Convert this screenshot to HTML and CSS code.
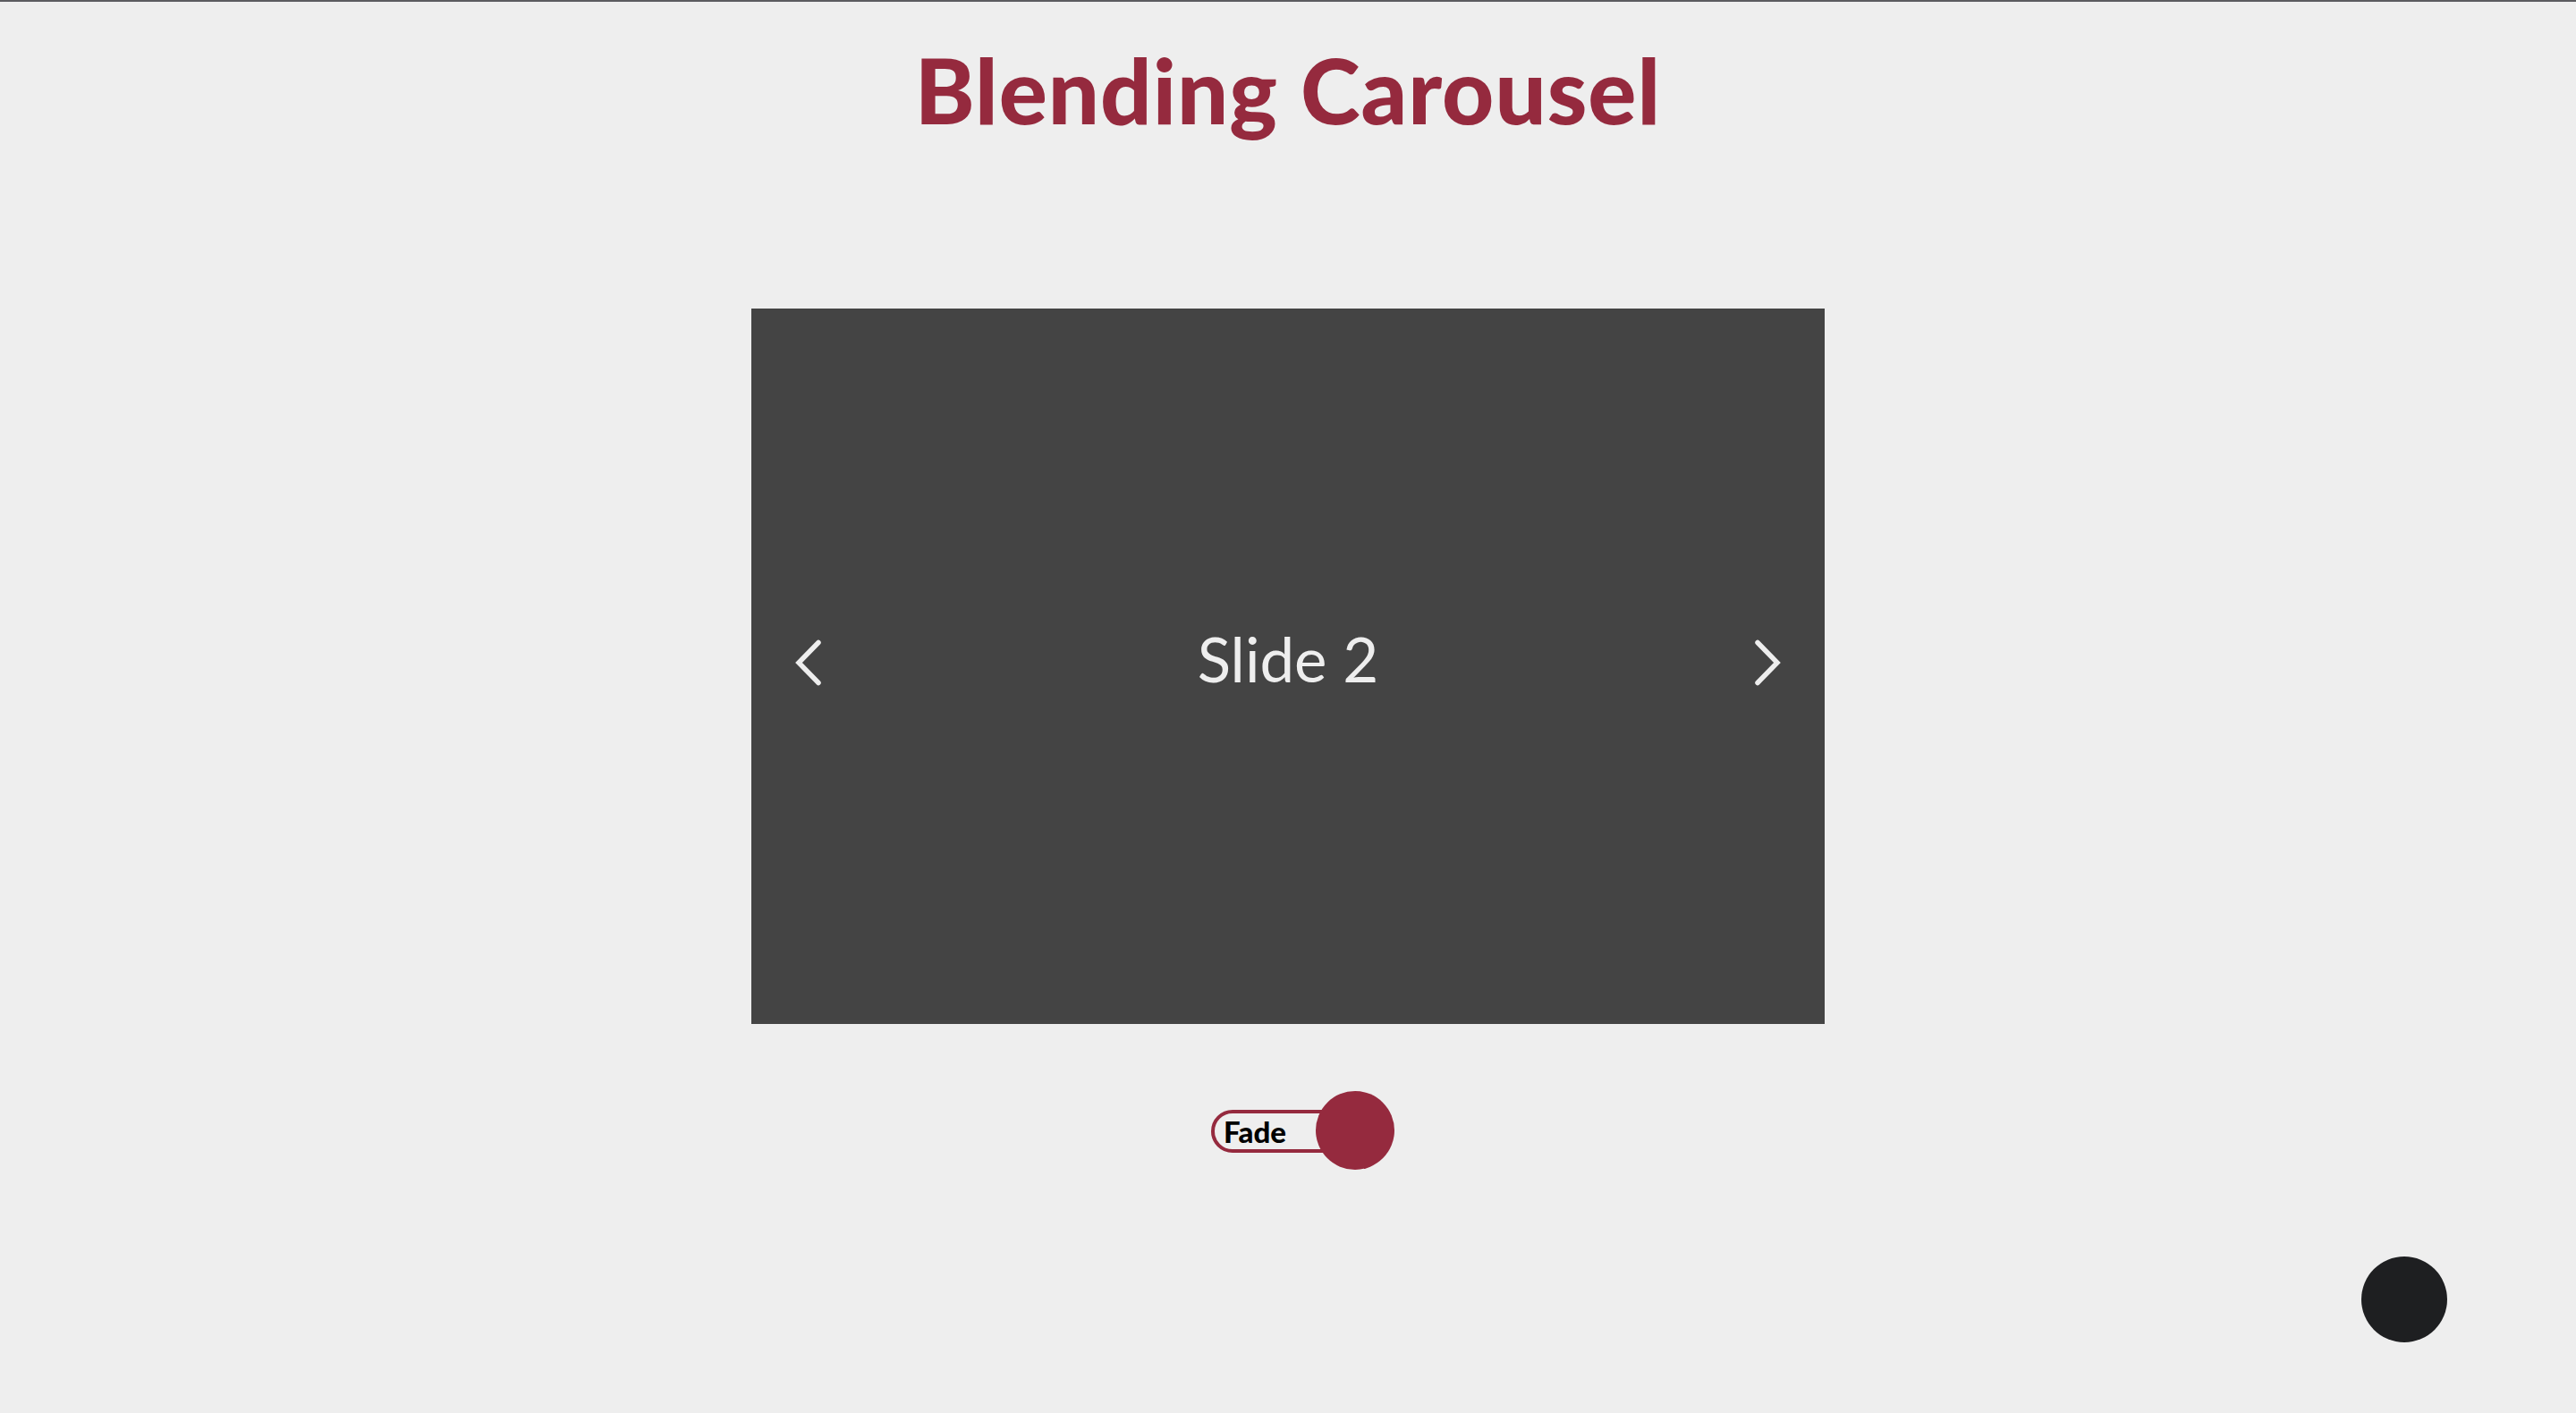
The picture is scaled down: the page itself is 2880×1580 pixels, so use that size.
FILE: index.html
```html
<!DOCTYPE html>
<html lang="en">
<head>
<meta charset="utf-8">
<title>Blending Carousel</title>
<link rel="stylesheet" href="styles.css">
</head>
<body>
<main class="page">
  <h1 class="title">Blending Carousel</h1>
  <section class="carousel">
    <button class="nav nav-prev" aria-label="Previous slide">
      <svg viewBox="0 0 32 52" width="32" height="52"><path d="M27 3.5 L5 26 L27 48.5" fill="none" stroke="#eeeeee" stroke-width="5.5" stroke-linecap="round" stroke-linejoin="miter"/></svg>
    </button>
    <div class="slide">Slide 2</div>
    <button class="nav nav-next" aria-label="Next slide">
      <svg viewBox="0 0 32 52" width="32" height="52"><path d="M5 3.5 L27 26 L5 48.5" fill="none" stroke="#eeeeee" stroke-width="5.5" stroke-linecap="round" stroke-linejoin="miter"/></svg>
    </button>
  </section>
  <div class="controls">
    <label class="toggle">
      <span class="toggle-label">Fade</span>
      <span class="toggle-knob"></span>
    </label>
  </div>
</main>
<button class="fab" aria-label="Menu"></button>
</body>
</html>
```
FILE: styles.css
```css
html, body {
  margin: 0;
  padding: 0;
}
body {
  background: #eeeeee;
  border-top: 2px solid #5b5b5f;
  min-height: 1578px;
  box-sizing: border-box;
  font-family: "Lato", "Liberation Sans", sans-serif;
}
.page {
  display: flex;
  flex-direction: column;
  align-items: center;
}
.title {
  margin: 38px 0 0;
  font-family: "Lato", "Liberation Sans", sans-serif;
  font-weight: 900;
  font-size: 101px;
  line-height: 120px;
  color: #952a3e;
  letter-spacing: 1px;
}
.carousel {
  margin-top: 185px;
  width: 1200px;
  height: 800px;
  background: #444444;
  display: flex;
  align-items: center;
  justify-content: space-between;
  padding: 0 48px;
  box-sizing: border-box;
}
.nav {
  background: none;
  border: 0;
  padding: 0;
  width: 32px;
  height: 52px;
  margin-top: -8px;
  display: flex;
  cursor: pointer;
}
.slide {
  color: #eeeeee;
  font-family: "Lato", "Liberation Sans", sans-serif;
  font-size: 69px;
  line-height: 80px;
  margin-top: -16px;
}
.controls {
  margin-top: 96px;
  display: flex;
  justify-content: center;
}
.toggle {
  position: relative;
  width: 172px;
  height: 48px;
  box-sizing: border-box;
  border: 4px solid #952a3e;
  border-radius: 24px;
  display: flex;
  align-items: center;
  padding-left: 10px;
}
.toggle-label {
  font-family: "Lato", "Liberation Sans", sans-serif;
  font-weight: 900;
  font-size: 33px;
  color: #000000;
  line-height: 40px;
}
.toggle-knob {
  position: absolute;
  left: 113px;
  top: -25px;
  width: 88px;
  height: 88px;
  border-radius: 50%;
  background: #952a3e;
}
.fab {
  position: fixed;
  right: 144px;
  bottom: 79px;
  width: 96px;
  height: 96px;
  border-radius: 50%;
  border: 0;
  background: #1e1f21;
  padding: 0;
}
```
